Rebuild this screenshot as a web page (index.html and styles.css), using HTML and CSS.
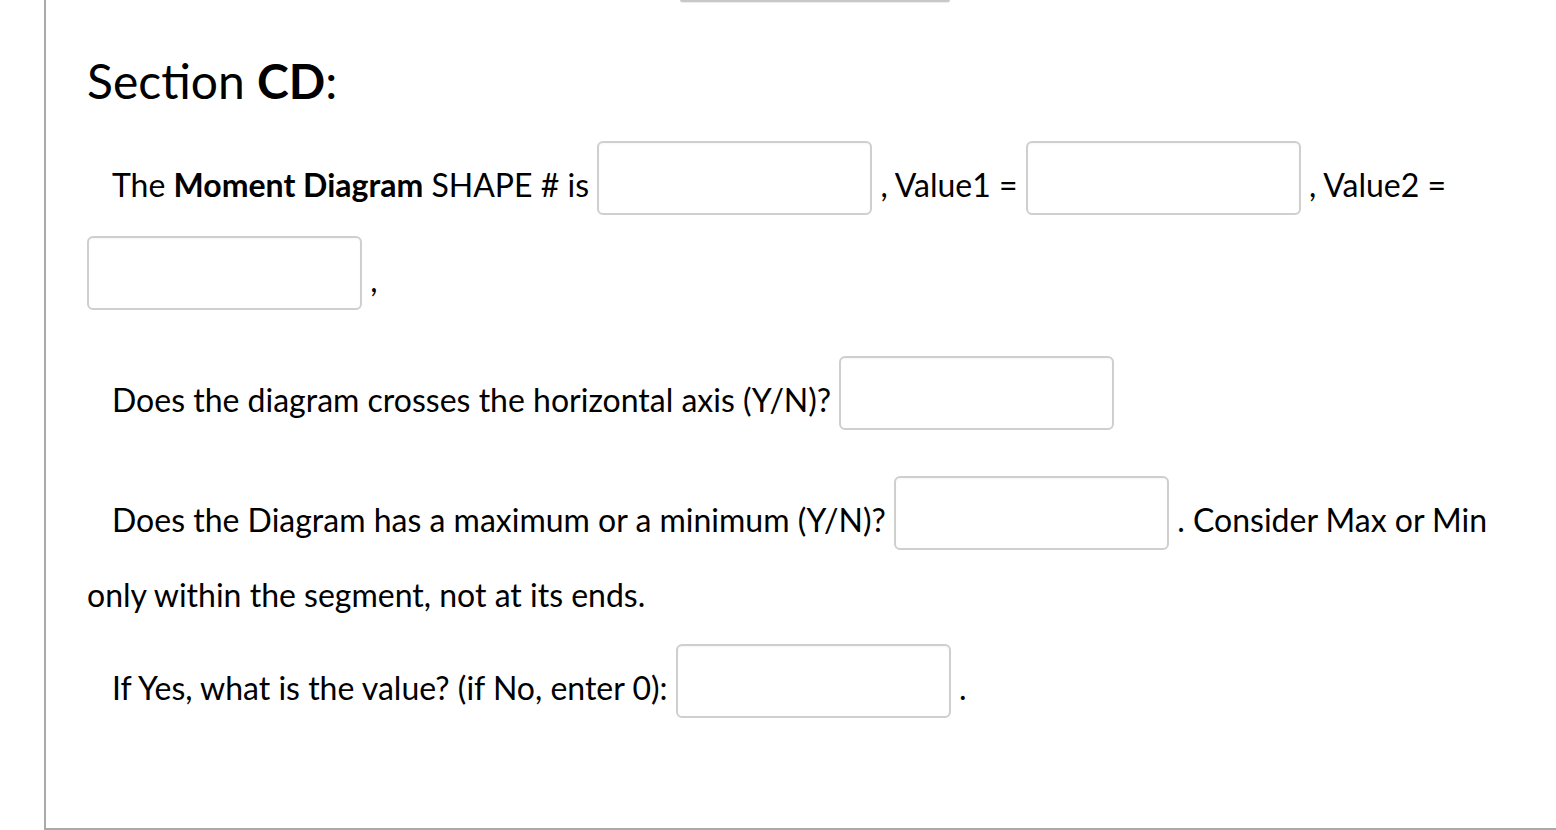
FILE: index.html
```html
<!DOCTYPE html>
<html lang="en">
<head>
    <meta charset="UTF-8">
    <meta name="viewport" content="width=device-width, initial-scale=1.0">
    <title>Section CD</title>
    <link rel="stylesheet" href="styles.css">
</head>
<body>

<div class="question">
    <!-- bottom of the answer box from the previous section -->
    <div class="prev-row"><span class="prev-box"></span></div>

    <h2 class="section-title">Section <strong>CD</strong>:</h2>

    <p class="line indent">
        The <strong>Moment Diagram</strong> SHAPE # is <input type="text" class="answer"> ,
        Value1 = <input type="text" class="answer"> , Value2 = <input type="text" class="answer"> ,
    </p>

    <p class="line indent">
        Does the diagram crosses the horizontal axis (Y/N)? <input type="text" class="answer">
    </p>

    <p class="line indent">
        Does the Diagram has a maximum or a minimum (Y/N)? <input type="text" class="answer"> . Consider Max or Min
        only within the segment, not at its ends.
    </p>

    <p class="line indent">
        If Yes, what is the value? (if No, enter 0): <input type="text" class="answer"> .
    </p>
</div>

</body>
</html>
```

FILE: styles.css
```css
body {
    margin: 0;
    padding: 0;
    background-color: #fff;
    font-family: Lato, "Open Sans", sans-serif;
    color: #000;
}

.question {
    margin-left: 44px;
    height: 828px;
    border-left: 2px solid #aaa;
    border-bottom: 2px solid #aaa;
    padding: 0 41px;
    overflow: hidden;
}

.prev-row {
    height: 2px;
    padding-left: 593px;
}

.prev-box {
    display: block;
    width: 270px;
    height: 0;
    border-bottom: 2px solid #c8c8c8;
    border-radius: 0 0 4px 4px;
    box-shadow: 0 1px 1px rgba(0, 0, 0, 0.08);
}

.section-title {
    font-size: 48px;
    font-weight: normal;
    margin: 49px 0 0 0;
    line-height: 60px;
}

.line {
    font-size: 32px;
    line-height: 48px;
    margin: 25px 0 0 0;
}

.section-title + .line {
    margin-top: 30px;
}

.indent {
    text-indent: 25px;
}

.answer {
    box-sizing: border-box;
    width: 275px;
    height: 74px;
    margin: 0 0 21px 0;
    padding: 0 12px;
    vertical-align: middle;
    border: 2px solid #cfcfcf;
    border-radius: 6px;
    background-color: #fff;
    box-shadow: inset 0 1px 2px rgba(0, 0, 0, 0.04);
    font-family: inherit;
    font-size: 24px;
    text-indent: 0;
}
```
